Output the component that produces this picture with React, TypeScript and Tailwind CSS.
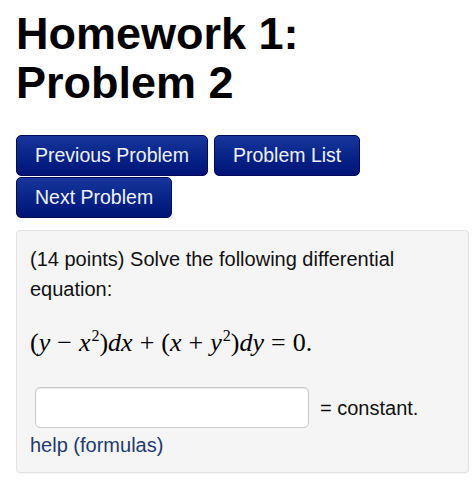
import React from "react"

const sans = { fontFamily: '"Liberation Sans", Arial, Helvetica, sans-serif' }

function NavButton({ label }: { label: string }) {
  return (
    <button className="h-[41px] rounded-[5px] border border-[#000c58] bg-gradient-to-b from-[#17359c] to-[#001276] px-[18px] text-[19.5px] leading-none text-[#eef2ff]">
      {label}
    </button>
  )
}

function Sq() {
  return <sup className="-top-[10px] ml-[1px] text-[16px]">2</sup>
}

function Equation() {
  return (
    <div
      className="mt-[24px] h-[30px] text-[26px] leading-[30px] text-black"
      style={{ fontFamily: '"Liberation Serif", "Times New Roman", serif' }}
    >
      <span>(</span>
      <i>y</i>
      <span className="mx-[7px]">−</span>
      <i>x</i>
      <Sq />
      <span>)</span>
      <i>dx</i>
      <span className="mx-[7px]">+</span>
      <span>(</span>
      <i>x</i>
      <span className="mx-[7px]">+</span>
      <i>y</i>
      <Sq />
      <span>)</span>
      <i>dy</i>
      <span className="mx-[7px]">=</span>
      <span>0.</span>
    </div>
  )
}

export default function App() {
  return (
    <div className="min-h-[484px] w-[474px] bg-white pl-[16px] pr-[5px] pt-[9px] text-black" style={sans}>
      <h1 className="text-[45px] font-bold leading-[49px]">
        Homework 1:
        <br />
        Problem 2
      </h1>

      <div className="mt-[28px] flex flex-wrap gap-x-[6px] gap-y-[1px] pr-[11px]">
        <NavButton label="Previous Problem" />
        <NavButton label="Problem List" />
        <NavButton label="Next Problem" />
      </div>

      <div className="mt-[12px] rounded-[4px] border border-[#e2e2e2] bg-[#f5f5f5] px-[13px] pb-[15px] pt-[13px] shadow-[0_1px_1px_rgba(0,0,0,0.04)]">
        <p className="text-[20px] leading-[30px] text-[#111]">
          (14 points) Solve the following differential equation:
        </p>

        <Equation />

        <div className="mt-[29px] ml-[5px] flex items-center">
          <input
            type="text"
            className="h-[41px] w-[274px] rounded-[5px] border border-[#c9c9c9] bg-white shadow-[inset_0_1px_1px_rgba(0,0,0,0.08)] outline-none"
          />
          <span className="ml-[11px] text-[20px] text-[#111]">= constant.</span>
        </div>

        <a className="mt-[5px] block text-[20px] leading-[24px] text-[#1f3a70]">help (formulas)</a>
      </div>
    </div>
  )
}
